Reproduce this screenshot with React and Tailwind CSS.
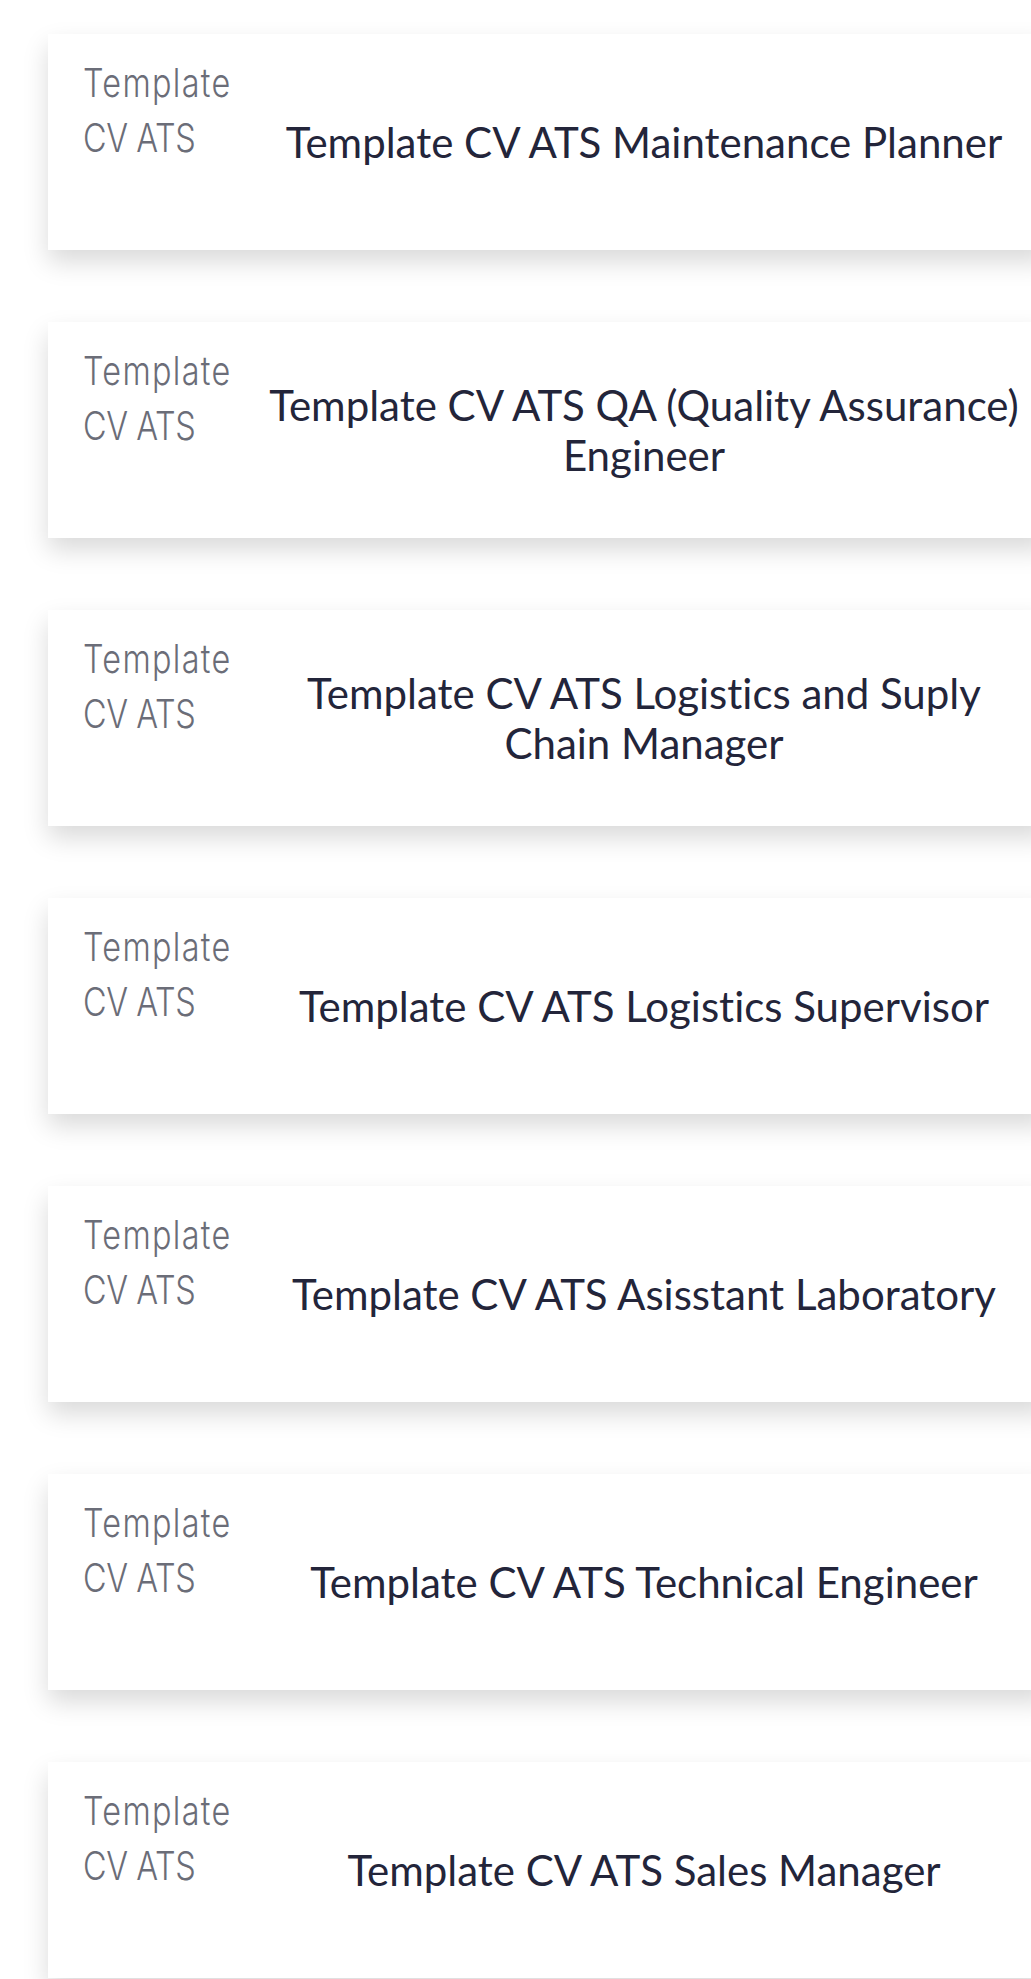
import React from "react";

const templates = [
  "Template CV ATS Maintenance Planner",
  "Template CV ATS QA (Quality Assurance) Engineer",
  "Template CV ATS Logistics and Suply Chain Manager",
  "Template CV ATS Logistics Supervisor",
  "Template CV ATS Asisstant Laboratory",
  "Template CV ATS Technical Engineer",
  "Template CV ATS Sales Manager",
];

function Thumb() {
  return (
    <div className="w-[209px] shrink-0 pl-[35px] pt-[21px]">
      <div
        className="text-[40px] leading-[55px] font-light text-[#6b6d78] origin-left scale-x-[0.81]"
        style={{ fontFamily: "Inter, 'Noto Sans', sans-serif" }}
      >
        <div className="tracking-[1.6px]">Template</div>
        <div className="tracking-[-0.5px]">CV ATS</div>
      </div>
    </div>
  );
}

export default function App() {
  return (
    <div className="w-[1031px] min-h-[1979px] bg-white overflow-hidden">
      <div className="flex flex-col gap-[72px] pl-[48px] pt-[34px]">
        {templates.map((title) => (
          <div
            key={title}
            className="w-[1000px] h-[216px] flex bg-white shadow-[0_12px_24px_rgba(0,0,0,0.15)]"
          >
            <Thumb />
            <div className="flex-1 flex items-center justify-center pr-[17px]">
              <h3
                className="text-center text-[42px] leading-[50px] text-[#23253a] [font-variant-ligatures:none]"
                style={{ fontFamily: "Lato, 'Open Sans', sans-serif" }}
              >
                {title}
              </h3>
            </div>
          </div>
        ))}
      </div>
    </div>
  );
}
